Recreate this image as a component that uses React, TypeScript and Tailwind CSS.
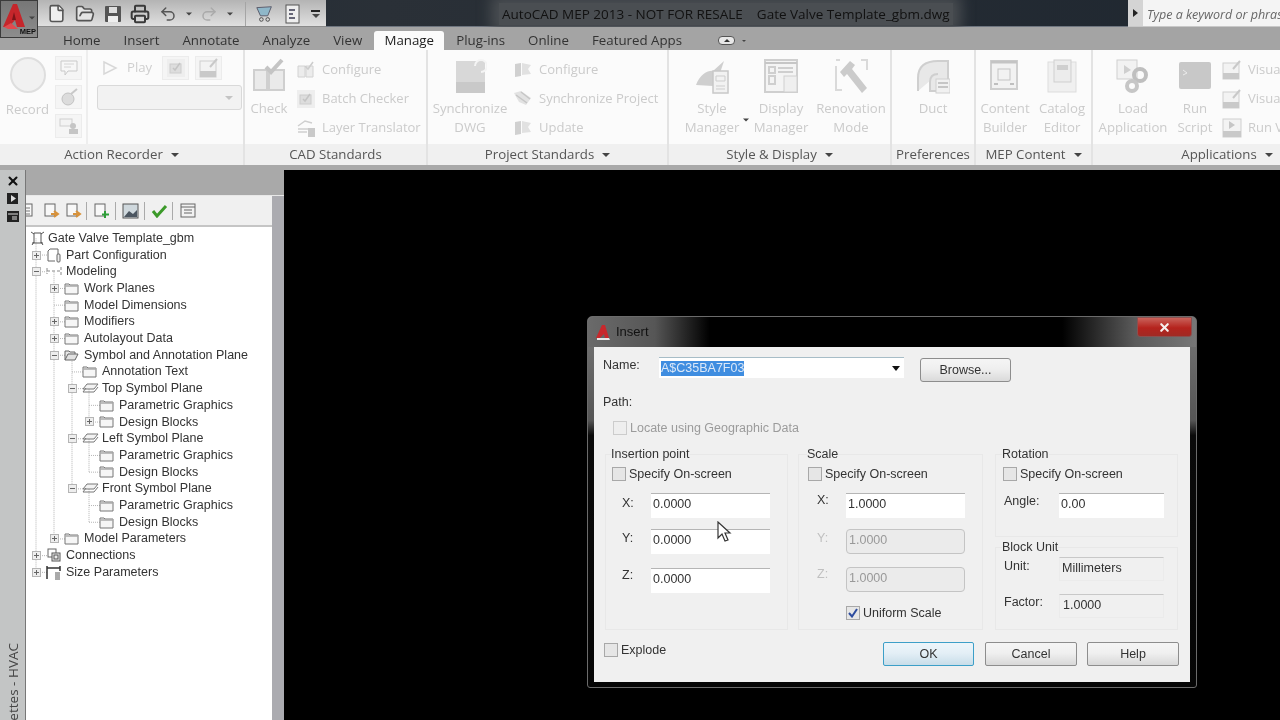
import { File, FolderOpen, Printer, Redo2, Undo2, X } from 'lucide-react';
import type { ReactNode } from 'react';

const faded = '#cfcfcf';

function Caret({ className = '' }: { className?: string }) {
  return <span className={`inline-block h-0 w-0 border-x-[4px] border-t-[4px] border-x-transparent border-t-[#444] ${className}`} />;
}

function AppButton() {
  return (
    <div className="absolute left-0 top-0 h-[38px] w-[38px] border border-[#3b3b3b] bg-[linear-gradient(#777,#8d8d8d)]">
      <svg width="30" height="30" viewBox="0 0 30 30" className="absolute left-0 top-0">
        <path d="M2 26 L12 3 H16 L24 26 H16 L14 19 L8 26 Z" fill="#c5262b" />
        <path d="M11 19 L13 11 L15 19 Z" fill="#7d1418" />
        <path d="M3 26 L10 22 L17 28 L7 28 Z" fill="#e24a4e" />
      </svg>
      <Caret className="absolute left-[27px] top-[15px] scale-75 border-t-[#222]" />
      <span className="absolute bottom-[1px] right-[1px] font-['Liberation_Sans',sans-serif] text-[7.5px] font-bold leading-[9px] text-[#111]">MEP</span>
    </div>
  );
}

function FadedIcon({ kind, w = 34, h = 36 }: { kind: string; w?: number; h?: number }) {
  const box = (
    <rect x="3" y="3" width="26" height="28" fill="#f2f2f2" stroke={faded} strokeWidth="2" />
  );
  return (
    <svg width={w} height={h} viewBox="0 0 34 36" fill="none">
      {kind === 'book' && (
        <>
          <path d="M2 12 H15 V32 H2 Z M17 12 H32 V32 H17 Z" fill="#eaeaea" stroke={faded} strokeWidth="2" />
          <path d="M14 9 L19 14 L30 2" stroke="#c4c4c4" strokeWidth="4" />
        </>
      )}
      {kind === 'sync' && (
        <>
          <rect x="3" y="3" width="29" height="32" fill="#d8d8d8" />
          <rect x="3" y="24" width="29" height="11" fill="#c9c9c9" />
          <path d="M22 8 a6 6 0 1 1 6 6" stroke="#f4f4f4" strokeWidth="2" />
        </>
      )}
      {kind === 'style' && (
        <>
          <path d="M1 27 C5 16 14 12 18 13 L29 3 L24 18 L18 28 Z" fill="#cfcfcf" />
          <rect x="18" y="13" width="15" height="22" fill="#f2f2f2" stroke="#c8c8c8" strokeWidth="1.5" />
          <path d="M21 18 H30 V23 H21 Z M21 28 H30 M21 31 H30" stroke="#cdcdcd" />
        </>
      )}
      {kind === 'display' && (
        <>
          <rect x="1" y="2" width="32" height="32" fill="#f4f4f4" stroke={faded} strokeWidth="2" />
          <path d="M1 5 H33" stroke="#c6c6c6" strokeWidth="2" />
          <path d="M5 9 H11 V15 H5 Z M5 18 H11 V26 H5 Z M14 10 H29 M14 14 H29" stroke="#cfcfcf" strokeWidth="2" />
          <rect x="20" y="18" width="13" height="16" fill="#efefef" stroke={faded} />
        </>
      )}
      {kind === 'hammer' && (
        <>
          <path d="M2 8 V32 H8 M2 2 H6 M27 2 H33 V12" stroke="#dadada" strokeWidth="2" />
          <path d="M6 14 L16 3 L21 7 L18 11 L33 30 L28 35 L13 16 L10 19 Z" fill="#cbcbcb" />
        </>
      )}
      {kind === 'duct' && (
        <>
          <path d="M2 33 V20 C2 8 10 3 22 3 H32 V33 H14 V24 C14 20 16 16 22 16" fill="#e8e8e8" stroke={faded} strokeWidth="2" />
          <rect x="20" y="21" width="14" height="14" fill="#f1f1f1" stroke={faded} />
          <path d="M22 25 H32 M22 29 H32" stroke="#c6c6c6" strokeWidth="2" />
        </>
      )}
      {kind === 'content' && (
        <>
          {box}
          <path d="M3 4 H29" stroke="#c4c4c4" strokeWidth="3" />
          <rect x="10" y="11" width="12" height="11" stroke="#c4c4c4" />
          <path d="M6 26 H10 M22 26 H26" stroke="#bfbfbf" strokeWidth="2" />
        </>
      )}
      {kind === 'catalog' && (
        <>
          <rect x="3" y="4" width="28" height="30" fill="#f0f0f0" stroke="#dddddd" />
          <rect x="9" y="2" width="17" height="22" fill="#ececec" stroke={faded} />
          <rect x="12" y="7" width="11" height="5" fill="#cfcfcf" />
        </>
      )}
      {kind === 'load' && (
        <>
          <rect x="1" y="2" width="20" height="19" fill="#f2f2f2" stroke={faded} />
          <path d="M8 7 L15 12 L8 16 Z" fill="#cfcfcf" />
          <circle cx="24" cy="17" r="6" stroke="#bfbfbf" strokeWidth="4" />
          <circle cx="16" cy="28" r="5" stroke="#c6c6c6" strokeWidth="4" />
        </>
      )}
      {kind === 'script' && (
        <>
          <rect x="1" y="4" width="32" height="27" rx="2" fill="#c8c8c8" />
          <path d="M5 12 L9 15 L5 17" stroke="#ececec" />
        </>
      )}
    </svg>
  );
}

function SmallIcon({ kind = 'doc' }: { kind?: string }) {
  return (
    <svg width="20" height="20" viewBox="0 0 20 20" fill="none" className="shrink-0">
      {kind === 'doc' && (
        <>
          <path d="M2 6 H9 V17 H2 Z M10 6 H17 V17 H10 Z" fill="#ececec" stroke="#d2d2d2" />
          <path d="M9 6 L12 9 L17 2" stroke="#cccccc" strokeWidth="1.5" />
        </>
      )}
      {kind === 'batch' && (
        <>
          <rect x="1" y="1" width="18" height="18" fill="#eeeeee" />
          <rect x="4" y="6" width="11" height="9" fill="#dddddd" stroke="#cccccc" />
          <path d="M7 10 L9 12 L14 5" stroke="#c4c4c4" strokeWidth="1.5" />
        </>
      )}
      {kind === 'layer' && (
        <>
          <path d="M2 8 L9 3 L16 5 M2 11 H13 M2 14 H11" stroke="#cfcfcf" strokeWidth="1.5" />
          <rect x="12" y="10" width="7" height="9" fill="#c9c9c9" />
        </>
      )}
      {kind === 'flag' && (
        <>
          <path d="M2 4 L8 3 V16 L2 17 Z" fill="#d0d0d0" />
          <path d="M9 3 L18 5 L15 9 L18 14 L9 15 Z" fill="#e1e1e1" />
        </>
      )}
      {kind === 'net' && (
        <>
          <path d="M1 4 L8 2 L18 9 L13 16 L6 13 Z" fill="#e2e2e2" />
          <path d="M3 6 L14 14 M8 3 L17 10" stroke="#c6c6c6" strokeWidth="1.5" />
        </>
      )}
      {kind === 'chart' && (
        <>
          <rect x="1" y="3" width="16" height="16" fill="#f3f3f3" stroke="#cfcfcf" />
          <path d="M1 13 H17 V19 H1 Z" fill="#c9c9c9" />
          <path d="M11 9 L18 1" stroke="#c9c9c9" strokeWidth="2" />
        </>
      )}
      {kind === 'run' && (
        <>
          <rect x="1" y="1" width="18" height="18" fill="#f3f3f3" stroke="#cfcfcf" />
          <path d="M7 3 L13 7 L7 11 Z" fill="#c6c6c6" />
          <path d="M1 13 H19 V19 H1 Z" fill="#c9c9c9" />
        </>
      )}
    </svg>
  );
}

function BigBtn({ icon, lines, className = '' }: { icon: ReactNode; lines: string[]; className?: string }) {
  return (
    <div className={`flex flex-col items-center ${className}`}>
      <div className="flex h-[49px] items-start justify-center pt-[8px]">{icon}</div>
      {lines.map((l) => (
        <div key={l} className="whitespace-nowrap text-[13.2px] leading-[18.5px] text-[#cbcbcb]">{l}</div>
      ))}
    </div>
  );
}

function SmallRows({ rows, className = '' }: { rows: [string, string][]; className?: string }) {
  return (
    <div className={`flex flex-col gap-[9px] pt-[10px] ${className}`}>
      {rows.map(([r, icon]) => (
        <div key={r} className="flex h-[20px] items-center gap-[6px] whitespace-nowrap text-[13px] text-[#cbcbcb]">
          <SmallIcon kind={icon} />
          {r}
        </div>
      ))}
    </div>
  );
}

function Panel({ title, w, caret = true, children }: { title: string; w: string; caret?: boolean; children: ReactNode }) {
  return (
    <div className={`flex shrink-0 flex-col overflow-hidden border-r-2 border-[#e3e3e3] ${w}`}>
      <div className="flex h-[94px]">{children}</div>
      <div className="flex h-[21px] items-center justify-center gap-[8px] bg-[#f0f0f0] text-[13.25px] text-[#555]">
        {title}
        {caret && <Caret />}
      </div>
    </div>
  );
}

function IconSquare({ children }: { children: ReactNode }) {
  return (
    <div className="flex h-[24px] w-[27px] items-center justify-center border border-[#ececec] bg-[#f5f5f5]">{children}</div>
  );
}

function Ribbon() {
  return (
    <div className="flex h-[115px] shrink-0 overflow-hidden bg-[#fbfbfb]">
      <Panel title="Action Recorder" w="w-[245px]">
        <div className="flex w-[55px] flex-col items-center pt-[7px]">
          <div className="h-[36px] w-[36px] rounded-full border-2 border-[#dedede] bg-[#f1f1f1]" />
          <div className="mt-[7px] text-[13.2px] leading-[18px] text-[#cbcbcb]">Record</div>
        </div>
        <div className="flex w-[33px] flex-col gap-[5px] border-r-2 border-[#eeeeee] pt-[6px]">
          <IconSquare>
            <svg width="20" height="18" viewBox="0 0 20 18" fill="none"><path d="M2 2 H18 V12 H9 L6 16 V12 H2 Z" fill="#f7f7f7" stroke="#c9c9c9" /><path d="M5 5 H15 M5 8 H12" stroke="#d4d4d4" /></svg>
          </IconSquare>
          <IconSquare>
            <svg width="20" height="18" viewBox="0 0 20 18" fill="none"><circle cx="9" cy="11" r="6" fill="#dcdcdc" stroke="#c2c2c2" /><path d="M12 6 L18 1" stroke="#c8c8c8" strokeWidth="2" /></svg>
          </IconSquare>
          <IconSquare>
            <svg width="20" height="18" viewBox="0 0 20 18" fill="none"><rect x="1" y="2" width="12" height="7" fill="#f3f3f3" stroke="#cfcfcf" /><circle cx="14" cy="9" r="3" fill="#c5c5c5" /><rect x="10" y="12" width="9" height="5" fill="#c5c5c5" /></svg>
          </IconSquare>
        </div>
        <div className="flex flex-col pl-[9px] pt-[6px]">
          <div className="flex h-[24px] items-center">
            <svg width="16" height="16" viewBox="0 0 16 16" fill="none" className="ml-[5px]"><path d="M2 2 L14 8 L2 14 Z" stroke="#d8d8d8" strokeWidth="1.5" /></svg>
            <span className="ml-[9px] w-[35px] text-[13.2px] text-[#cfcfcf]">Play</span>
            <IconSquare><SmallIcon kind="batch" /></IconSquare>
            <div className="w-[6px]" />
            <IconSquare><SmallIcon kind="chart" /></IconSquare>
          </div>
          <div className="mt-[5px] flex h-[25px] w-[145px] items-center justify-end rounded-[3px] border border-[#d9d9d9] bg-[#f2f2f2] pr-[8px]">
            <span className="h-0 w-0 border-x-[4px] border-t-[4px] border-x-transparent border-t-[#c4c4c4]" />
          </div>
        </div>
      </Panel>
      <Panel title="CAD Standards" w="w-[183px]" caret={false}>
        <BigBtn className="ml-[5px] w-[38px]" icon={<FadedIcon kind="book" />} lines={['Check']} />
        <SmallRows className="ml-[8px]" rows={[['Configure', 'doc'], ['Batch Checker', 'batch'], ['Layer Translator', 'layer']]} />
      </Panel>
      <Panel title="Project Standards" w="w-[241px]">
        <BigBtn className="ml-[4px] w-[76px]" icon={<FadedIcon kind="sync" />} lines={['Synchronize', 'DWG']} />
        <SmallRows className="ml-[5px]" rows={[['Configure', 'flag'], ['Synchronize Project', 'net'], ['Update', 'flag']]} />
      </Panel>
      <Panel title="Style & Display" w="w-[223px]">
        <div className="relative ml-[13px] w-[60px]">
          <BigBtn icon={<FadedIcon kind="style" />} lines={['Style', 'Manager']} />
          <Caret className="absolute left-[60px] top-[68px] scale-75" />
        </div>
        <BigBtn className="ml-[9px] w-[60px]" icon={<FadedIcon kind="display" />} lines={['Display', 'Manager']} />
        <BigBtn className="ml-[5px] w-[70px]" icon={<FadedIcon kind="hammer" />} lines={['Renovation', 'Mode']} />
      </Panel>
      <Panel title="Preferences" w="w-[84px]" caret={false}>
        <BigBtn className="w-full" icon={<FadedIcon kind="duct" />} lines={['Duct']} />
      </Panel>
      <Panel title="MEP Content" w="w-[117px]">
        <BigBtn className="ml-[2px] w-[54px]" icon={<FadedIcon kind="content" />} lines={['Content', 'Builder']} />
        <BigBtn className="ml-[3px] w-[54px]" icon={<FadedIcon kind="catalog" />} lines={['Catalog', 'Editor']} />
      </Panel>
      <Panel title="Applications" w="w-[270px]">
        <BigBtn className="ml-[4px] w-[72px]" icon={<FadedIcon kind="load" />} lines={['Load', 'Application']} />
        <BigBtn className="ml-[6px] w-[40px]" icon={<FadedIcon kind="script" />} lines={['Run', 'Script']} />
        <SmallRows className="ml-[7px]" rows={[['Visual LISP Editor', 'chart'], ['Visual Basic Editor', 'chart'], ['Run VBA Macro', 'run']]} />
      </Panel>
    </div>
  );
}

function TopBar() {
  return (
    <div className="flex h-[27px] shrink-0 bg-[linear-gradient(90deg,#1e2a35,#2a3037_30%,#1f2730)]">
      <div className="flex w-[326px] shrink-0 items-center border-b border-[#8a8a8a] bg-[linear-gradient(#b4b4b4,#e0e0e0)] pl-[47px] pt-[1px]">
        <File size={19} color="#555" fill="#efefef" className="mr-[9px]" />
        <FolderOpen size={20} color="#555" fill="#e4e4e4" className="mr-[9px]" />
        <svg width="18" height="18" viewBox="0 0 18 18" className="mr-[8px]"><rect x="1" y="1" width="16" height="16" rx="1" fill="#555" /><rect x="5" y="2" width="8" height="6" fill="#ddd" /><rect x="4" y="11" width="10" height="6" fill="#eee" /></svg>
        <Printer size={20} color="#3a3a3a" strokeWidth={2.4} className="mr-[9px]" />
        <Undo2 size={18} color="#555" className="mr-[8px]" />
        <Caret className="mr-[7px] scale-75" />
        <Redo2 size={18} color="#aaa" className="mr-[8px]" />
        <Caret className="mr-[11px] scale-75" />
        <div className="mr-[9px] h-[24px] w-px bg-[#a5a5a5]" />
        <svg width="20" height="20" viewBox="0 0 22 20" fill="none" className="mr-[10px]"><path d="M2 3 L18 2 L14 12 L6 12 Z" fill="#8fb7c9" stroke="#556" /><circle cx="7" cy="16" r="2" stroke="#444" /><circle cx="14" cy="16" r="2" stroke="#444" /></svg>
        <svg width="16" height="20" viewBox="0 0 16 20" fill="none" className="mr-[10px]"><rect x="1" y="1" width="13" height="18" fill="#eee" stroke="#555" /><path d="M4 6 H10 M4 10 H8 M4 14 H10" stroke="#667" strokeWidth="2" /></svg>
        <div className="flex flex-col items-center gap-[2px]"><div className="h-[2px] w-[9px] bg-[#222]" /><Caret className="border-t-[#222]" /></div>
      </div>
      <div className="flex min-w-0 flex-1 items-center border-b border-[#6f7680] pl-[173px] pt-[1px]">
        <span className="whitespace-pre bg-[#4a4e52] px-[3px] text-[13.5px] leading-[22px] text-[#111] shadow-[0_0_14px_8px_#4a4e52]">AutoCAD MEP 2013 - NOT FOR RESALE    Gate Valve Template_gbm.dwg</span>
      </div>
      <div className="flex w-[152px] shrink-0 overflow-hidden border-b border-[#c8c8c8] bg-[#f4f4f4]">
        <div className="flex w-[15px] shrink-0 items-center justify-center bg-[#d4d4d4]">
          <span className="h-0 w-0 border-y-[4px] border-l-[5px] border-y-transparent border-l-[#222]" />
        </div>
        <span className="ml-[4px] whitespace-nowrap pt-[6px] text-[12.5px] italic leading-[18px] text-[#666]">Type a keyword or phrase</span>
      </div>
    </div>
  );
}

function Tabs() {
  const tabs = ['Home', 'Insert', 'Annotate', 'Analyze', 'View'];
  const tabs2 = ['Plug-ins', 'Online', 'Featured Apps'];
  return (
    <div className="flex h-[23px] shrink-0 items-end bg-[#a4a4a4] pl-[63px] text-[13.3px] text-[#333]">
      <div className="flex h-[23px] items-center gap-[23px] pt-[4px]">
        {tabs.map((t) => <span key={t}>{t}</span>)}
      </div>
      <span className="ml-[12px] flex h-[19px] w-[70px] items-center justify-center rounded-t-[3px] bg-[#fbfbfb] pt-[1px] text-[#222]">Manage</span>
      <div className="ml-[12px] flex h-[23px] items-center gap-[23px] pt-[4px]">
        {tabs2.map((t) => <span key={t}>{t}</span>)}
      </div>
      <div className="ml-[36px] flex h-[23px] items-center gap-[5px] pt-[4px]">
        <div className="flex h-[9px] w-[17px] items-center justify-center rounded-sm border border-[#555] bg-[#e8e8e8]"><span className="h-0 w-0 border-x-[3px] border-b-[3px] border-x-transparent border-b-[#333]" /></div>
        <Caret className="scale-50" />
      </div>
    </div>
  );
}

function FolderIcon({ open = false }: { open?: boolean }) {
  return (
    <svg width="15" height="13" viewBox="0 0 15 13" fill="none" className="shrink-0">
      {open ? (
        <>
          <path d="M1 11 V2 H5 L6 3 H11 V5" stroke="#666" fill="#e8e8e8" />
          <path d="M1 11 L4 5 H14 L11 11 Z" fill="#e2e2e2" stroke="#666" />
        </>
      ) : (
        <>
          <path d="M1 2 H5 L6 3 H14 V12 H1 Z" fill="#f6f6f6" stroke="#777" />
          <path d="M1 4 H14" stroke="#aaa" strokeWidth="1.5" />
        </>
      )}
    </svg>
  );
}

function PlaneIcon() {
  return (
    <svg width="17" height="13" viewBox="0 0 17 13" fill="none" className="shrink-0">
      <path d="M1 7 L5 2 H16 L12 7 Z" fill="#f2f2f2" stroke="#777" />
      <path d="M1 10 L4 6 M1 10 H12 L16 5" stroke="#777" />
    </svg>
  );
}

function PartIcon({ kind }: { kind: string }) {
  return (
    <svg width="16" height="15" viewBox="0 0 16 15" fill="none" className="shrink-0">
      {kind === 'root' && <path d="M4 2 H11 M4 2 V12 M11 2 V12 M2 12 H13 M1 1 L4 3 M14 1 L11 3 M2 14 L4 11 M13 14 L11 11" stroke="#555" />}
      {kind === 'config' && (
        <>
          <path d="M2 13 V3 L4 1 H12 V7" stroke="#666" />
          <path d="M2 13 H9" stroke="#666" />
          <rect x="11" y="6" width="3" height="8" rx="1" fill="#eee" stroke="#666" />
        </>
      )}
      {kind === 'model' && <path d="M1 4 V10 M15 3 V11 M1 7 H15" stroke="#888" strokeDasharray="3 2" />}
      {kind === 'conn' && (
        <>
          <rect x="2" y="1" width="8" height="8" stroke="#666" fill="#fff" />
          <rect x="6" y="5" width="8" height="8" stroke="#555" fill="#eee" />
          <rect x="8" y="7" width="4" height="4" stroke="#555" />
        </>
      )}
      {kind === 'size' && (
        <>
          <path d="M1 1 V14 M14 1 V6 M1 3 H14" stroke="#333" strokeWidth="1.5" />
          <path d="M9 8 H14 M9 10 H14 M9 12 H14 M9 14 H14" stroke="#555" />
        </>
      )}
    </svg>
  );
}

type TreeRow = { label: string; level: number; icon: ReactNode; exp?: '+' | '-' };

const folder = <FolderIcon />;
const plane = <PlaneIcon />;

const indents = ['pl-[4px]', 'pl-[6px]', 'pl-[24px]', 'pl-[42px]', 'pl-[59px]'];
const lineX = [0, 10, 28, 46, 63];
const rowH = 16.7;
const rowMid = (i: number) => 3 + rowH / 2 + rowH * i;

const treeRows: TreeRow[] = [
  { label: 'Gate Valve Template_gbm', level: 0, icon: <PartIcon kind="root" /> },
  { label: 'Part Configuration', level: 1, icon: <PartIcon kind="config" />, exp: '+' },
  { label: 'Modeling', level: 1, icon: <PartIcon kind="model" />, exp: '-' },
  { label: 'Work Planes', level: 2, icon: folder, exp: '+' },
  { label: 'Model Dimensions', level: 2, icon: folder },
  { label: 'Modifiers', level: 2, icon: folder, exp: '+' },
  { label: 'Autolayout Data', level: 2, icon: folder, exp: '+' },
  { label: 'Symbol and Annotation Plane', level: 2, icon: <FolderIcon open />, exp: '-' },
  { label: 'Annotation Text', level: 3, icon: folder },
  { label: 'Top Symbol Plane', level: 3, icon: plane, exp: '-' },
  { label: 'Parametric Graphics', level: 4, icon: folder },
  { label: 'Design Blocks', level: 4, icon: folder, exp: '+' },
  { label: 'Left Symbol Plane', level: 3, icon: plane, exp: '-' },
  { label: 'Parametric Graphics', level: 4, icon: folder },
  { label: 'Design Blocks', level: 4, icon: folder },
  { label: 'Front Symbol Plane', level: 3, icon: plane, exp: '-' },
  { label: 'Parametric Graphics', level: 4, icon: folder },
  { label: 'Design Blocks', level: 4, icon: folder },
  { label: 'Model Parameters', level: 2, icon: folder, exp: '+' },
  { label: 'Connections', level: 1, icon: <PartIcon kind="conn" />, exp: '+' },
  { label: 'Size Parameters', level: 1, icon: <PartIcon kind="size" />, exp: '+' },
];

// vertical guides: [x, first row, last row]
const guides = [
  [10, 0, 20],
  [28, 2, 18],
  [46, 7, 15],
  [63, 9, 11],
  [63, 12, 14],
  [63, 15, 17],
];

function Tree() {
  return (
    <div className="relative min-h-0 flex-1 bg-white pt-[3px] font-['Liberation_Sans',sans-serif] text-[12.5px] text-[#333]">
      {/* dotted connector lines */}
      <svg className="absolute left-0 top-0" width="120" height="360" fill="none" stroke="#b5b5b5" strokeDasharray="1 1">
        {guides.map(([x, a, b]) => (
          <path key={`${x}-${a}`} d={`M${x} ${rowMid(a)} V${rowMid(b)}`} />
        ))}
        {treeRows.map((r, i) =>
          r.level > 0 ? <path key={i} d={`M${lineX[r.level]} ${rowMid(i)} H${lineX[r.level] + 11}`} /> : null
        )}
      </svg>
      {treeRows.map((r, i) => (
        <div key={i} className={`relative flex h-[16.7px] items-center whitespace-nowrap ${indents[r.level]}`}>
          {r.level > 0 && (
            <span className="flex w-[14px] shrink-0 items-center">
              {r.exp && (
                <span className="relative flex h-[9px] w-[9px] items-center justify-center border border-[#b5b5b5] bg-[#eeeeee]">
                  <span className="absolute h-px w-[5px] bg-[#666]" />
                  {r.exp === '+' && <span className="absolute h-[5px] w-px bg-[#666]" />}
                </span>
              )}
            </span>
          )}
          <span className={`flex shrink-0 items-center ${r.level > 0 ? 'w-[19px]' : 'w-[17px]'}`}>{r.icon}</span>
          <span className="ml-[1px] bg-white">{r.label}</span>
        </div>
      ))}
    </div>
  );
}

function DocIcon({ badge }: { badge: string }) {
  return (
    <svg width="17" height="17" viewBox="0 0 17 17" fill="none" className="shrink-0">
      <rect x="2" y="2" width="10" height="12" fill="#f8f8f8" stroke="#666" />
      {badge === 'plus' && <path d="M12 9 V16 M9 12.5 H16" stroke="#2f9e3a" strokeWidth="2" />}
      {badge === 'arrow' && <path d="M8 12 H14 M11 9 L15 12 L11 15" stroke="#d8923a" strokeWidth="2" />}
      {badge === 'grid' && <path d="M5 6 H10 M5 9 H10 M5 12 H10" stroke="#777" />}
    </svg>
  );
}

function PaletteToolbar() {
  return (
    <div className="flex h-[29px] shrink-0 items-center overflow-hidden bg-[#f0f0f0]">
      <div className="w-[11px] shrink-0 overflow-hidden"><div className="-ml-[6px]"><DocIcon badge="grid" /></div></div>
      <div className="ml-[6px] mr-[5px]"><DocIcon badge="arrow" /></div>
      <div className="mr-[4px]"><DocIcon badge="arrow" /></div>
      <div className="mr-[6px] h-[18px] w-px bg-[#aaa]" />
      <div className="mr-[5px]"><DocIcon badge="plus" /></div>
      <div className="mr-[6px] h-[18px] w-px bg-[#aaa]" />
      <svg width="17" height="16" viewBox="0 0 17 16" className="mr-[5px]"><rect x="1" y="1" width="15" height="14" fill="#cfd8dd" stroke="#555" /><path d="M2 14 L7 8 L11 11 L15 7 V14 Z" fill="#4b5560" /></svg>
      <div className="mr-[6px] h-[18px] w-px bg-[#aaa]" />
      <svg width="17" height="14" viewBox="0 0 17 14" fill="none" className="mr-[4px]"><path d="M2 7 L6 12 L15 2" stroke="#3c9a2a" strokeWidth="3" /></svg>
      <div className="mr-[7px] h-[18px] w-px bg-[#aaa]" />
      <svg width="16" height="15" viewBox="0 0 16 15" fill="none"><rect x="1" y="1" width="14" height="13" fill="#f2f2f2" stroke="#666" /><path d="M1 4 H15 M4 7 H12 M4 10 H12" stroke="#666" /></svg>
    </div>
  );
}

function Palette() {
  return (
    <div className="flex w-[284px] shrink-0">
      <div className="flex h-full w-[26px] shrink-0 flex-col items-center overflow-hidden border-r border-[#777] bg-[#c3c5c5] pt-[4px]">
        <X size={14} strokeWidth={3.5} color="#111" className="shrink-0" />
        <svg width="11" height="11" viewBox="0 0 11 11" className="mt-[5px] shrink-0"><rect width="11" height="11" fill="#222" /><path d="M4 2 L9 5.5 L4 9 Z" fill="#ddd" /></svg>
        <svg width="12" height="11" viewBox="0 0 12 11" className="mt-[7px] shrink-0"><rect width="12" height="11" fill="#222" /><path d="M1 3 H11 M5 6 H10 M5 8 H10" stroke="#ddd" /></svg>
        <div className="mt-[421px] shrink-0 rotate-180 whitespace-nowrap font-['Open_Sans',sans-serif] text-[13.5px] leading-[18px] text-[#444] [writing-mode:vertical-rl]">
          Tool Palettes - HVAC
        </div>
      </div>
      <div className="flex flex-1 flex-col bg-[#ababb0]">
        <div className="h-[26px] shrink-0 border-b border-[#e8e8e8] bg-[#a9a9a9]" />
        <div className="flex min-h-0 flex-1 flex-col pr-[12px]">
          <PaletteToolbar />
          <div className="h-[2px] shrink-0 bg-[#c5c5c5]" />
          <Tree />
        </div>
      </div>
    </div>
  );
}

function Check({ checked = false, className = '' }: { checked?: boolean; className?: string }) {
  return (
    <span className={`flex h-[14px] w-[14px] shrink-0 items-center justify-center border border-[#a8a8a8] bg-[#e6e6e6] ${className}`}>
      {checked && (
        <svg width="10" height="10" viewBox="0 0 10 10" fill="none"><path d="M1 5 L4 8.5 L9 1" stroke="#2d4c9e" strokeWidth="2" /></svg>
      )}
    </span>
  );
}

function Field({ value, disabled = false, className = '' }: { value: string; disabled?: boolean; className?: string }) {
  return (
    <div className={`h-[25px] pl-[2px] pt-[2px] leading-[16px] ${disabled ? 'rounded-sm border border-[#c4c4c4] bg-[#ebebeb] text-[#999]' : 'border-t border-[#b5b5b5] bg-white text-[#333]'} ${className}`}>
      {value}
    </div>
  );
}

function DlgButton({ label, focus = false }: { label: string; focus?: boolean }) {
  return (
    <button className={`flex h-[24px] items-center justify-center rounded-[2px] border text-[#333] ${focus ? 'mr-[1px] w-[91px] border-[#3c9fc8] bg-[linear-gradient(#ecf5fa,#e4eff6_45%,#c8dde9)]' : 'w-[92px] border-[#8d8d8d] bg-[linear-gradient(#f5f5f5,#f0f0f0_45%,#d8d8d8)]'}`}>
      {label}
    </button>
  );
}

function Insert() {
  return (
    <div className="absolute left-[587px] top-[316px] flex h-[372px] w-[610px] flex-col rounded-t-[5px] rounded-b-[3px] border border-[#6b6b6b] bg-[linear-gradient(#777,#555_28%,#0a0a0a_32%,#050505)] px-[6px] pb-[5px] font-['Liberation_Sans',sans-serif] text-[12.5px]">
      <div className="-mx-[6px] flex h-[30px] shrink-0 items-start rounded-t-[5px] bg-[linear-gradient(90deg,#6a6a6a,#565656_11%,#000_20%,#000_78%,#5b5b5b_90%,#777)] pl-[7px]">
        <svg width="18" height="18" viewBox="0 0 18 18" className="mt-[6px]">
          <path d="M1 15 L7 2 H10 L14 15 H10 L9 11 L5 15 Z" fill="#c8282c" />
          <path d="M2 15 H14 L15 17 H2 Z" fill="#e5e5e5" />
        </svg>
        <span className="ml-[3px] mt-[5px] text-[13px] text-[#111]">Insert</span>
        <div className="ml-auto mr-[4px] flex h-[20px] w-[55px] items-center justify-center rounded-b-[3px] border border-[#8a5050] bg-[linear-gradient(#c9625a,#b5231d_55%,#a02a24)]">
          <X size={13} strokeWidth={4} color="#f5f0ee" />
        </div>
      </div>
      <div className="flex min-h-0 flex-1 flex-col bg-[#f0f0f0] text-[#333]">
        <div className="flex pl-[9px] pt-[10px]">
          <div className="-mt-[1px] w-[56px]">Name:</div>
          <div className="flex h-[21px] w-[245px] items-center justify-between border-t border-[#a7bdc7] bg-white pl-[2px] pr-[4px]">
            <span className="bg-[#3f8de0] leading-[15px] text-[#dbe8f8]">A$C35BA7F03</span>
            <span className="h-0 w-0 border-x-[4.5px] border-t-[5px] border-x-transparent border-t-[#111]" />
          </div>
          <button className="ml-[16px] mt-[1px] h-[24px] w-[91px] rounded-[3px] border border-[#8d8d8d] bg-[linear-gradient(#f5f5f5,#efefef_45%,#dadada)]">Browse...</button>
        </div>
        <div className="ml-[9px] mt-[12px] h-[16px] leading-[16px]">Path:</div>
        <div className="ml-[19px] mt-[11px] flex h-[14px] items-center text-[#9b9b9b]">
          <Check className="border-[#cccccc] bg-[#eeeeee]" />
          <span className="ml-[3px]">Locate using Geographic Data</span>
        </div>

        <div className="mt-[11px] flex pl-[11px]">
          <fieldset className="h-[184px] w-[183px] border border-[#e8e8e8] pl-[6px]">
            <legend className="-ml-[1px] h-[16px] leading-[16px]">Insertion point</legend>
            <div className="mt-[5px] flex h-[14px] items-center"><Check /><span className="ml-[3px] pt-[1px]">Specify On-screen</span></div>
            <div className="mt-[12px] flex"><span className="w-[39px] pl-[10px] pt-[1px]">X:</span><Field value="0.0000" className="w-[119px]" /></div>
            <div className="mt-[11px] flex"><span className="w-[39px] pl-[10px]">Y:</span><Field value="0.0000" className="w-[119px]" /></div>
            <div className="mt-[14px] flex"><span className="-mt-[2px] w-[39px] pl-[10px]">Z:</span><Field value="0.0000" className="w-[119px]" /></div>
          </fieldset>
          <fieldset className="ml-[10px] h-[184px] w-[185px] border border-[#e8e8e8] pl-[9px]">
            <legend className="-ml-[1px] h-[16px] leading-[16px]">Scale</legend>
            <div className="mt-[5px] flex h-[14px] items-center"><Check /><span className="ml-[3px] pt-[1px]">Specify On-screen</span></div>
            <div className="mt-[12px] flex"><span className="-mt-[2px] w-[38px] pl-[9px]">X:</span><Field value="1.0000" className="w-[119px]" /></div>
            <div className="mt-[11px] flex"><span className="w-[38px] pl-[9px] text-[#c0c0c0]">Y:</span><Field disabled value="1.0000" className="w-[119px]" /></div>
            <div className="mt-[13px] flex"><span className="-mt-[2px] w-[38px] pl-[9px] text-[#c0c0c0]">Z:</span><Field disabled value="1.0000" className="w-[119px]" /></div>
            <div className="ml-[38px] mt-[14px] flex h-[14px] items-center"><Check checked className="bg-[#dfe3ea]" /><span className="ml-[3px] pt-[1px]">Uniform Scale</span></div>
          </fieldset>
          <div className="ml-[12px] flex w-[183px] flex-col">
            <fieldset className="h-[91px] border border-[#e8e8e8] pl-[7px]">
              <legend className="-ml-[1px] h-[16px] leading-[16px]">Rotation</legend>
              <div className="mt-[5px] flex h-[14px] items-center"><Check /><span className="ml-[3px] pt-[1px]">Specify On-screen</span></div>
              <div className="mt-[12px] flex"><span className="-mt-[1px] w-[56px] pl-[1px]">Angle:</span><Field value="0.00" className="w-[105px]" /></div>
            </fieldset>
            <fieldset className="mt-[2px] h-[91px] border border-[#e8e8e8] pl-[7px]">
              <legend className="-ml-[1px] h-[16px] leading-[16px]">Block Unit</legend>
              <div className="mt-[2px] flex"><span className="w-[56px] pl-[1px]">Unit:</span><div className="flex h-[24px] w-[105px] items-center border border-[#ebebeb] border-t-[#c8c8c8] pb-[2px] pl-[2px]">Millimeters</div></div>
              <div className="mt-[13px] flex"><span className="-mt-[1px] w-[56px] pl-[1px]">Factor:</span><div className="flex h-[24px] w-[105px] items-center border border-[#ebebeb] border-t-[#c8c8c8] pb-[2px] pl-[3px]">1.0000</div></div>
            </fieldset>
          </div>
        </div>

        <div className="mt-[12px] flex h-[24px] pl-[10px] pr-[11px]">
          <div className="mt-[1px] flex h-[14px] items-center"><Check /><span className="ml-[3px] pt-[1px]">Explode</span></div>
          <div className="ml-auto flex gap-[10px]">
            <DlgButton label="OK" focus />
            <DlgButton label="Cancel" />
            <DlgButton label="Help" />
          </div>
        </div>
      </div>
    </div>
  );
}

export default function App() {
  return (
    <div className="relative flex h-[720px] w-[1280px] flex-col overflow-hidden bg-black font-['Open_Sans',sans-serif] blur-[0.35px]">
      <TopBar />
      <Tabs />
      <Ribbon />
      <div className="h-[5px] shrink-0 bg-[#a9a9a9]" />
      <div className="flex min-h-0 flex-1">
        <Palette />
        <div className="flex-1 bg-black" />
      </div>
      <AppButton />
      <Insert />
      {/* mouse cursor */}
      <svg className="absolute left-[717px] top-[521px]" width="15" height="21" viewBox="0 0 15 21">
        <path d="M1 1 V17 L5 13 L8 20 L11 19 L8 12 L13 12 Z" fill="#fff" stroke="#333" strokeWidth="1.2" />
      </svg>
    </div>
  );
}
